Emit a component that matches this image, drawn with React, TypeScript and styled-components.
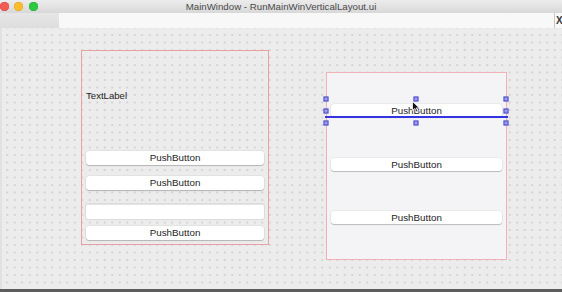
import React from "react";
import styled, { createGlobalStyle } from "styled-components";

const Global = createGlobalStyle`
  html, body { margin: 0; padding: 0; overflow: hidden; background: #ececec; }
  body { font-family: "Liberation Sans", Arial, sans-serif; }
`;

const Window = styled.div`
  width: 562px;
  height: 292px;
  display: flex;
  flex-direction: column;
  overflow: hidden;
`;

const TitleBar = styled.div`
  flex: none;
  height: 13px;
  display: grid;
  grid-template-columns: 1fr auto 1fr;
  align-items: center;
  background: linear-gradient(#ececec, #d8d8d8);
`;

const Lights = styled.div`
  display: flex;
  gap: 5.5px;
  margin-left: -0.5px;
`;

const Light = styled.span<{ $c: string; $b: string }>`
  width: 9px;
  height: 9px;
  border-radius: 50%;
  background: ${(p) => p.$c};
  box-shadow: inset 0 0 0 0.5px ${(p) => p.$b};
`;

const Title = styled.div`
  font-size: 9.7px;
  color: #4a4a4a;
  white-space: nowrap;
  line-height: 12px;
`;

const TabRow = styled.div`
  flex: none;
  height: 15px;
  display: flex;
  background: #f8f8f8;
`;

const Tab = styled.div`
  width: 59px;
  background: linear-gradient(#e6e6e6, #dedede);
`;

const Spacer = styled.div`
  flex: 1;
`;

const Close = styled.div`
  width: 6px;
  border-left: 1px solid #c8c8c8;
  font-size: 10px;
  font-weight: bold;
  color: #3a3a3a;
  line-height: 15px;
  padding-left: 1px;
  overflow: hidden;
`;

const Canvas = styled.div`
  flex: 1;
  position: relative;
  background-color: #ececec;
  background-image: radial-gradient(circle, #d3d3d3 0.75px, transparent 1.1px);
  background-size: 7.5px 7.5px;
  background-position: 3.5px 3.25px;
  box-shadow: inset 2px 0 0 #e1e1e1;
`;

const BottomLine = styled.div`
  flex: none;
  height: 3px;
  background: #5d5d5d;
`;

const Form = styled.div<{ $x: number; $y: number; $w: number; $h: number; $fill?: string; $border: string }>`
  position: absolute;
  left: ${(p) => p.$x}px;
  top: ${(p) => p.$y}px;
  width: ${(p) => p.$w}px;
  height: ${(p) => p.$h}px;
  box-sizing: border-box;
  border: 1px solid ${(p) => p.$border};
  background: ${(p) => p.$fill ?? "transparent"};
  padding: 0 4px;
  display: flex;
  flex-direction: column;
`;

const Label = styled.div<{ $mt: number }>`
  margin-top: ${(p) => p.$mt}px;
  height: 12px;
  line-height: 12px;
  font-size: 9.6px;
  color: #1e1e1e;
`;

const Button = styled.div<{ $mt: number; $h: number }>`
  flex: none;
  margin-top: ${(p) => p.$mt}px;
  height: ${(p) => p.$h}px;
  line-height: ${(p) => p.$h}px;
  background: #fff;
  border-radius: 3px;
  box-shadow: 0 1px 1px rgba(0, 0, 0, 0.2), 0 0 0 0.5px rgba(0, 0, 0, 0.08);
  text-align: center;
  font-size: 9.8px;
  color: #1e1e1e;
  white-space: nowrap;
`;

const Field = styled.div<{ $mt: number }>`
  flex: none;
  margin-top: ${(p) => p.$mt}px;
  height: 15px;
  background: #fff;
  border-radius: 2px;
  box-shadow: 0 0 0 1px #dcdcdc, inset 0 1px 0 #e4e4e4;
`;

const SelectBox = styled.div`
  position: absolute;
  left: -1px;
  top: 26px;
  width: 180px;
  height: 24px;
`;

const Handle = styled.span<{ $x: number; $y: number }>`
  position: absolute;
  left: ${(p) => p.$x}%;
  top: ${(p) => p.$y}%;
  width: 5px;
  height: 5px;
  box-sizing: border-box;
  transform: translate(-50%, -50%);
  background: #9c9cee;
  border: 1px solid #4c4cc4;
`;

const DropLine = styled.div`
  position: absolute;
  left: -2px;
  right: -2px;
  top: 43px;
  height: 2px;
  background: #3434e0;
`;

const Cursor = styled.svg`
  position: absolute;
  left: 85px;
  top: 28px;
`;

const handles: [number, number][] = [
  [0, 0], [50, 0], [100, 0],
  [0, 50], [100, 50],
  [0, 100], [50, 100], [100, 100],
];

export default function App() {
  return (
    <>
      <Global />
      <Window>
        <TitleBar>
          <Lights>
            <Light $c="#f25c55" $b="#d8443e" />
            <Light $c="#fbbd2e" $b="#dea123" />
            <Light $c="#2fc841" $b="#20a931" />
          </Lights>
          <Title>MainWindow - RunMainWinVerticalLayout.ui</Title>
          <span />
        </TitleBar>
        <TabRow>
          <Tab />
          <Spacer />
          <Close>X</Close>
        </TabRow>
        <Canvas>
          <Form $x={81} $y={22} $w={188} $h={195} $border="#e8a2a6">
            <Label $mt={39}>TextLabel</Label>
            <Button $mt={49} $h={14}>PushButton</Button>
            <Button $mt={11} $h={14}>PushButton</Button>
            <Field $mt={14} />
            <Button $mt={7} $h={14}>PushButton</Button>
          </Form>
          <Form $x={326} $y={44} $w={181} $h={188} $fill="#f4f4f6" $border="#f0b2b8">
            <Button $mt={31} $h={13}>PushButton</Button>
            <Button $mt={41} $h={13}>PushButton</Button>
            <Button $mt={40} $h={13}>PushButton</Button>
            <DropLine />
            <SelectBox>
              {handles.map(([x, y], i) => (
                <Handle key={i} $x={x} $y={y} />
              ))}
            </SelectBox>
            <Cursor width="8" height="12" viewBox="0 0 8 12">
              <path d="M0.5 0.5 L0.5 9.5 L2.8 7.4 L4.4 11 L5.8 10.4 L4.3 6.9 L7.3 6.9 Z" fill="#111" stroke="#fff" strokeWidth="0.8" />
            </Cursor>
          </Form>
        </Canvas>
        <BottomLine />
      </Window>
    </>
  );
}
